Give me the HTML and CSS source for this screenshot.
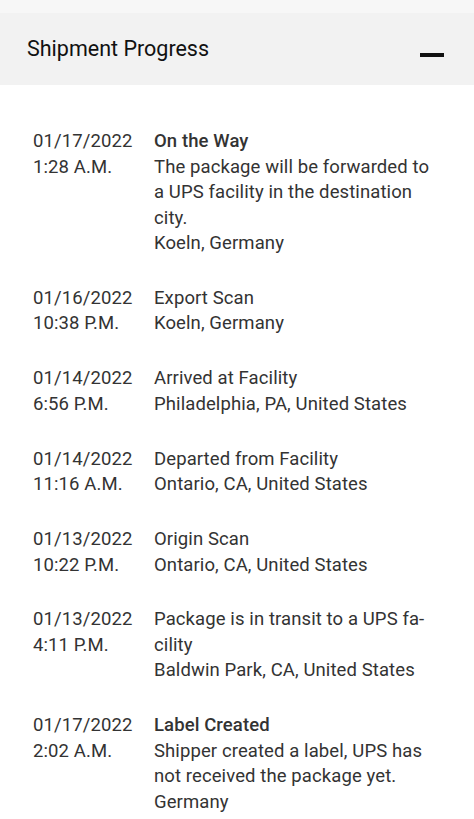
FILE: index.html
```html
<!DOCTYPE html>
<html lang="en">
<head>
<meta charset="utf-8">
<link rel="stylesheet" href="styles.css">
</head>
<body>
<div class="topstrip"></div>
<div class="panel-header">
  <h2 class="panel-title">Shipment Progress</h2>
  <span class="collapse-icon" aria-label="Collapse"></span>
</div>
<ul class="timeline">
  <li class="event">
    <div class="when">01/17/2022<br>1:28 A.M.</div>
    <div class="what"><div class="status strong">On the Way</div><div>The package will be forwarded to a UPS facility in the destination city.</div><div>Koeln, Germany</div></div>
  </li>
  <li class="event">
    <div class="when">01/16/2022<br>10:38 P.M.</div>
    <div class="what"><div class="status">Export Scan</div><div>Koeln, Germany</div></div>
  </li>
  <li class="event">
    <div class="when">01/14/2022<br>6:56 P.M.</div>
    <div class="what"><div class="status">Arrived at Facility</div><div>Philadelphia, PA, United States</div></div>
  </li>
  <li class="event">
    <div class="when">01/14/2022<br>11:16 A.M.</div>
    <div class="what"><div class="status">Departed from Facility</div><div>Ontario, CA, United States</div></div>
  </li>
  <li class="event">
    <div class="when">01/13/2022<br>10:22 P.M.</div>
    <div class="what"><div class="status">Origin Scan</div><div>Ontario, CA, United States</div></div>
  </li>
  <li class="event">
    <div class="when">01/13/2022<br>4:11 P.M.</div>
    <div class="what"><div class="status">Package is in transit to a UPS fa&shy;cility</div><div>Baldwin Park, CA, United States</div></div>
  </li>
  <li class="event">
    <div class="when">01/17/2022<br>2:02 A.M.</div>
    <div class="what"><div class="status strong">Label Created</div><div>Shipper created a label, UPS has not received the package yet.</div><div>Germany</div></div>
  </li>
</ul>
</body>
</html>
```
FILE: styles.css
```css
html, body {
  margin: 0;
  padding: 0;
  background: #ffffff;
  font-family: Roboto, "Noto Sans", Arial, sans-serif;
  color: #333333;
}
.topstrip {
  height: 13px;
  background: #f7f7f7;
}
.panel-header {
  height: 72px;
  background: #f2f2f2;
  display: flex;
  align-items: center;
  justify-content: space-between;
  padding: 0 30px 0 27px;
}
.panel-title {
  margin: 0;
  font-size: 21.5px;
  font-weight: 400;
  color: #111111;
  padding-bottom: 1px;
}
.collapse-icon {
  display: block;
  width: 24px;
  height: 3.5px;
  background: #111111;
  margin-top: 12px;
}
.timeline {
  list-style: none;
  margin: 0;
  padding: 44px 36px 0 33px;
  display: flex;
  flex-direction: column;
  gap: 29.4px;
}
.event {
  display: grid;
  grid-template-columns: 121px 1fr;
  font-size: 18.5px;
  letter-spacing: 0.1px;
  line-height: 25.5px;
}
.when {
  color: #333333;
  white-space: nowrap;
}
.what {
  color: #333333;
}
.strong {
  font-weight: 500;
}
```
